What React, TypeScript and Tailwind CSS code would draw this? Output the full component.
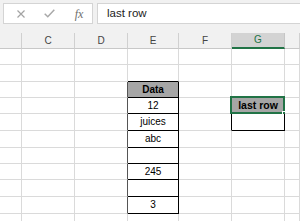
import React from 'react';

const cols = ['B', 'C', 'D', 'E', 'F', 'G', 'H'];

const rowHeights = [
  'h-[16px]', 'h-[17px]', 'h-[16px]', 'h-[16px]', 'h-[17px]', 'h-[17px]',
  'h-[16px]', 'h-[16px]', 'h-[17px]', 'h-[17px]', 'h-[17px]',
];

// values in column E, by row index
const dataE: Record<number, string> = { 2: 'Data', 3: '12', 4: 'juices', 5: 'abc', 6: '', 7: '245', 8: '', 9: '3' };

const inTable = (r: number) => r >= 2 && r <= 9;

const Cell: React.FC<{ r: number; c: string }> = ({ r, c }) => {
  let right = 'border-r-[#dadada]';
  let bottom = 'border-b-[#dadada]';
  let bg = 'bg-white';
  let content: React.ReactNode = null;

  if (c === 'D' && inTable(r)) right = 'border-r-[#555555]';
  if (c === 'E') {
    if (r === 1) bottom = 'border-b-black';
    if (inTable(r)) {
      right = 'border-r-black';
      bottom = 'border-b-black';
      const v = dataE[r];
      content = r === 2
        ? <span className="font-bold text-[10px] font-['Liberation_Sans',sans-serif]">{v}</span>
        : <span className="text-[10px] font-['Liberation_Sans_Narrow','Liberation_Sans',sans-serif]">{v}</span>;
      if (r === 2) bg = 'bg-[#a6a6a6]';
    }
  }
  if (c === 'F' && (r === 3 || r === 4)) right = 'border-r-black';
  if (c === 'G') {
    if (r === 2) bottom = 'border-b-black';
    if (r === 3 || r === 4) {
      right = 'border-r-black';
      bottom = 'border-b-black';
    }
    if (r === 3) {
      bg = 'bg-[#a6a6a6]';
      content = <span className="font-bold text-[10.5px] font-['Liberation_Sans',sans-serif]">last row</span>;
    }
  }

  return (
    <div className={`relative flex items-center justify-center border-r border-b ${right} ${bottom} ${bg} text-black leading-none`}>
      {content}
      {c === 'G' && r === 3 && (
        <>
          <div className="absolute -top-[2px] -left-[2px] -right-[1px] -bottom-[1px] border-2 border-[#217346] pointer-events-none" />
          <div className="absolute -right-[4px] -bottom-[4px] w-[6px] h-[6px] bg-[#217346] border border-white" />
        </>
      )}
    </div>
  );
};

const App: React.FC = () => {
  return (
    <div className="w-[300px] h-[221px] overflow-hidden bg-white font-['Liberation_Sans',sans-serif]">
      {/* formula bar */}
      <div className="h-[33px] bg-[#f1f1f1] flex items-start pt-[3px] pl-[3px] gap-[4px]">
        <div className="w-[90px] h-[21px] bg-white border border-[#d4d4d4] flex items-center">
          <span className="w-[14px] ml-[10px] flex justify-center">
            <svg width="8" height="8" viewBox="0 0 8 8"><path d="M0.5 0.5 L7.5 7.5 M7.5 0.5 L0.5 7.5" stroke="#a3a3a3" strokeWidth="1.2" /></svg>
          </span>
          <span className="w-[14px] ml-[14px] flex justify-center">
            <svg width="11" height="9" viewBox="0 0 11 9"><path d="M0.7 4.8 L3.8 7.8 L10.3 0.8" stroke="#a8a8a8" strokeWidth="1.5" fill="none" /></svg>
          </span>
          <span className="w-[14px] ml-[16px] flex justify-center italic text-[12px] text-[#6e6e6e] font-['Liberation_Serif',serif] leading-none">fx</span>
        </div>
        <div className="flex-1 h-[21px] bg-white border border-r-0 border-[#d4d4d4] flex items-center pl-[9px] text-[11.5px] text-[#222222] leading-none">
          last row
        </div>
      </div>

      {/* sheet */}
      <div className="grid grid-cols-[22px_53px_53px_51px_53px_53px_1fr]">
        {cols.map((c) => (
          <div
            key={c}
            className={`h-[16px] border-r border-b flex items-center justify-center text-[10px] leading-none ${
              c === 'G'
                ? 'bg-[#d3d3d3] text-[#217346] border-r-[#c6c6c6] border-b-2 border-b-[#217346]'
                : 'bg-[#f1f1f1] text-[#444444] border-r-[#d0d0d0] border-b-[#c8c8c8]'
            }`}
          >
            {c === 'B' || c === 'H' ? '' : c}
          </div>
        ))}
        {rowHeights.map((h, r) => (
          <React.Fragment key={r}>
            {cols.map((c) => (
              <div key={c} className={`${h} grid`}>
                <Cell r={r} c={c} />
              </div>
            ))}
          </React.Fragment>
        ))}
      </div>
    </div>
  );
};

export default App;
